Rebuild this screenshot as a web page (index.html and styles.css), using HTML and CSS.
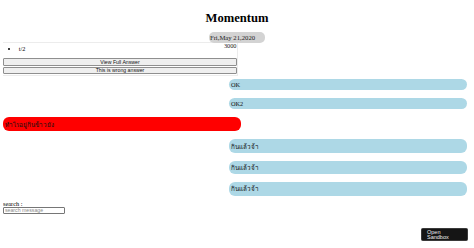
FILE: index.html
```html
<!DOCTYPE html>
<html lang="en">
<head>
<meta charset="utf-8">
<title>Momentum</title>
<link rel="stylesheet" href="styles.css">
</head>
<body>
  <h1 class="title">Momentum</h1>
  <div class="date-row"><span class="date-pill">Fri,May 21,2020</span></div>
  <div class="card">
    <div class="card-top">
      <ul class="answers"><li>t/2</li></ul>
      <span class="count">3000</span>
    </div>
    <div class="card-actions">
      <button class="btn">View Full Answer</button>
      <button class="btn">This is wrong answer</button>
    </div>
  </div>
  <div class="chat">
    <div class="msg msg-me">OK</div>
    <div class="msg msg-me">OK2</div>
    <div class="msg msg-other">ทำไรอยู่กินข้าวยัง</div>
    <div class="msg msg-me msg-tall">กินแล้วจ้า</div>
    <div class="msg msg-me msg-tall">กินแล้วจ้า</div>
    <div class="msg msg-me msg-tall">กินแล้วจ้า</div>
  </div>
  <div class="search">
    <label class="search-label" for="q">search :</label>
    <input class="search-input" id="q" type="text" placeholder="search message">
  </div>
  <a class="sandbox-btn" href="#">Open Sandbox</a>
</body>
</html>
```

FILE: styles.css
```css
html, body {
  background: #ffffff;
}
body {
  margin: 3px;
  font-family: "Liberation Serif", "Times New Roman", serif;
  font-size: 6.3px;
  color: #000;
}
.title {
  font-size: 12.6px;
  font-weight: bold;
  text-align: center;
  margin: 8.4px 0 6px;
}
.date-row {
  text-align: center;
  line-height: 7px;
}
.date-pill {
  display: inline-block;
  background: #d3d3d3;
  border-radius: 5px;
  padding: 1.6px 10px 1.6px 1px;
  font-size: 6.7px;
  color: #222;
}
.card {
  width: 50%;
  box-shadow: 0 0 0 1px #ececec;
}
.card-top {
  display: flex;
  justify-content: space-between;
  align-items: flex-start;
}
.answers {
  margin: 2.4px 0 6.4px;
  padding-left: 15.8px;
  line-height: 7px;
  list-style: disc;
}
.count {
  margin-right: 0.5px;
  line-height: 6px;
  color: #222;
}
.card-actions {
  display: flex;
  flex-direction: column;
  gap: 0.8px;
  padding-bottom: 1px;
}
.btn {
  display: block;
  width: 100%;
  height: 7.4px;
  margin: 0;
  padding: 0;
  font-family: "Liberation Sans", Arial, sans-serif;
  font-size: 5.2px;
  line-height: 5px;
  color: #111;
  background: #efefef;
  border: 0.8px solid #8f8f8f;
  border-radius: 1px;
}
.chat {
  display: flex;
  flex-direction: column;
  gap: 8px;
  padding-top: 4.5px;
}
.msg {
  width: 50%;
  padding: 2px 2px;
  border-radius: 6px;
  line-height: 7px;
  color: #111;
}
.msg-me {
  background: #add8e6;
  margin-left: auto;
  margin-right: 4px;
}
.msg-tall {
  padding: 3.2px 2px;
}
.msg-other {
  background: #ff0000;
  margin-right: auto;
  padding: 3.5px 2px;
}
.search {
  margin-top: 4px;
  line-height: 7px;
}
.search-label {
  display: block;
}
.search-input {
  display: block;
  width: 62px;
  height: 7.6px;
  box-sizing: border-box;
  margin: 0;
  padding: 0 1px;
  font-family: "Liberation Sans", Arial, sans-serif;
  font-size: 5.2px;
  border: 0.6px solid #767676;
  border-radius: 1px;
}
.search-input::placeholder {
  color: #8a8a8a;
}
.sandbox-btn {
  position: fixed;
  right: 6px;
  bottom: 7px;
  width: 47px;
  height: 13px;
  box-sizing: border-box;
  padding: 0.8px 5px 0;
  background: #151515;
  border: 0.6px solid #3a3a3a;
  border-radius: 1.5px;
  color: #f0f0f0;
  text-decoration: none;
  font-family: "Liberation Sans", Arial, sans-serif;
  font-size: 5.5px;
  line-height: 5.6px;
  word-spacing: 20px;
}
```
